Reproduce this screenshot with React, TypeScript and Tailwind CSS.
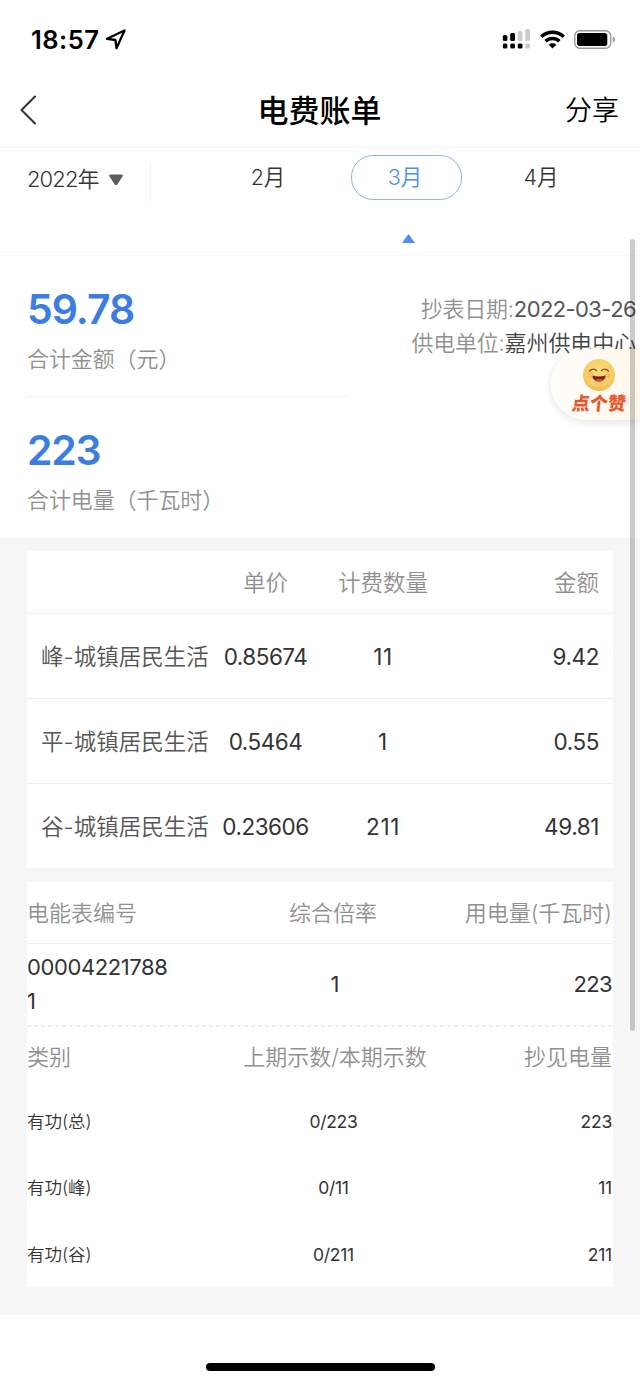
import React from "react";

const charges = [
  { name: "峰-城镇居民生活", price: "0.85674", qty: "11", amount: "9.42" },
  { name: "平-城镇居民生活", price: "0.5464", qty: "1", amount: "0.55" },
  { name: "谷-城镇居民生活", price: "0.23606", qty: "211", amount: "49.81" },
];

const readings = [
  { type: "有功(总)", range: "0/223", used: "223" },
  { type: "有功(峰)", range: "0/11", used: "11" },
  { type: "有功(谷)", range: "0/211", used: "211" },
];

function StatusBar() {
  return (
    <div className="flex h-[78px] items-center pl-[31px] pr-6">
      <span className="w-[69px] pt-[2px] text-[25.5px] leading-none font-semibold tracking-[0.5px]">18:57</span>
      <svg className="ml-[5px]" width="22" height="21" viewBox="0 0 22 21" fill="none" stroke="#000" strokeWidth="2.3" strokeLinejoin="round">
        <path d="M19.500 1.500 2 9.800l8.400 1.200 1.100 8.200z" />
      </svg>
      <svg className="ml-auto" width="28" height="20" viewBox="0 0 28 20">
        <g fill="#000">
          <rect x="0.800" y="6" width="4.600" height="6" rx="1.500" />
          <rect x="8.200" y="4" width="4.800" height="8" rx="1.500" />
          <rect x="0.800" y="14.600" width="4.600" height="5" rx="1.500" />
          <rect x="8.200" y="14.600" width="4.800" height="5" rx="1.500" />
          <rect x="15.700" y="14.600" width="4.800" height="5" rx="1.500" />
        </g>
        <g fill="#ccc">
          <rect x="15.700" y="2" width="4.800" height="10" rx="1.500" />
          <rect x="23.200" y="0" width="4.800" height="12" rx="1.500" />
          <rect x="23.200" y="14.600" width="4.800" height="5" rx="1.500" />
        </g>
      </svg>
      <svg className="ml-[10px]" width="25" height="19" viewBox="0 0 25 19" fill="none" stroke="#000" strokeWidth="3.500">
        <path d="M1.300 6.700a16.200 16.200 0 0 1 22.400 0" />
        <path d="M5.600 11.200a10 10 0 0 1 13.800 0" />
        <path d="M8.700 14.800a5.600 5.600 0 0 1 7.600 0L12.500 18.600z" fill="#000" stroke="none" />
      </svg>
      <svg className="ml-[9px]" width="42" height="19" viewBox="0 0 42 19">
        <rect x="0.800" y="0.800" width="35.900" height="17.400" rx="5" fill="none" stroke="#999" strokeWidth="1.400" />
        <rect x="3" y="3" width="30.300" height="13" rx="2.800" fill="#000" />
        <path d="M38.800 6.500c3 .9 3 5.100 0 6z" fill="#999" />
      </svg>
    </div>
  );
}

function Header() {
  return (
    <header className="grid h-[70px] grid-cols-3 items-center border-b border-[#f4f4f4] pb-[5px] pl-5 pr-[21px]">
      <svg width="17" height="30" viewBox="0 0 17 30" fill="none" stroke="#333" strokeWidth="2.1" strokeLinecap="round" strokeLinejoin="round">
        <path d="M15 1.500 1.500 15 15 28.500" />
      </svg>
      <h1 className="pt-[2px] text-center text-[31px] leading-[40px] font-medium">电费账单</h1>
      <span className="pt-[2px] text-right text-[27px] leading-[40px] font-[350]">分享</span>
    </header>
  );
}

function MonthPicker() {
  return (
    <nav className="flex h-[108px] border-b border-[#f7f7f7] text-[22px] font-[350] text-[#333]">
      <div className="mt-[14px] flex h-10 w-[151px] items-center border-r border-[#f3f3f3] pb-[6px] pl-[27px]">
        <span className="w-[82px] tracking-[-0.9px] whitespace-nowrap">2022年</span>
        <svg width="14" height="12" viewBox="0 0 15 12" className="mt-px">
          <path d="M2 0h11c1.700 0 2.200 1.300 1.300 2.500L8.900 10.700c-.8 1-2 1-2.800 0L.700 2.500C-.2 1.300.3 0 2 0z" fill="#5c5c5c" />
        </svg>
      </div>
      <div className="ml-[49px] mt-[7px] flex items-start text-[21.5px]">
        <div className="flex h-[45px] w-[136px] items-center justify-center">2月</div>
        <div className="ml-[15px] flex flex-col items-center">
          <div className="flex h-[45px] w-[111px] items-center justify-center rounded-[22px] border border-[#8ab4f2] pr-[3px] text-[#4b8ef0]">3月</div>
          <svg className="mt-[34px] ml-[3px]" width="13" height="9" viewBox="0 0 13 9">
            <path d="M6.500 0 13 9H0z" fill="#4d8ff0" />
          </svg>
        </div>
        <div className="ml-[11px] flex h-[45px] w-[136px] items-center justify-center">4月</div>
      </div>
    </nav>
  );
}

function Summary() {
  const label = "mt-[7px] font-['Noto_Sans_CJK_SC',sans-serif] text-[22px] leading-[32px] font-[350] tracking-[-0.1px] text-[#909090]";
  return (
    <section className="flex h-[282px] justify-between pl-[27px] pr-[4px]">
      <div className="w-[321px] shrink-0">
        <div className="h-[141px] border-b border-[#f1f1f1] pt-[28px]">
          <div className="text-[41px] leading-[50px] font-semibold tracking-[-1px] text-[#3b7de0]">59.78</div>
          <div className={label}>合计金额（元）</div>
        </div>
        <div className="pt-[28px]">
          <div className="text-[41px] leading-[50px] font-semibold tracking-[-1.3px] text-[#3b7de0]">223</div>
          <div className={label}>合计电量（千瓦时）</div>
        </div>
      </div>
      <div className="pt-[36px] text-right text-[22px] leading-[34px] whitespace-nowrap">
        <div><span className="font-[350] tracking-[-0.2px] text-[#909090]">抄表日期:</span><span className="tracking-[-0.6px] text-[#555]">2022-03-26</span></div>
        <div><span className="font-[350] tracking-[-0.2px] text-[#909090]">供电单位:</span><span className="font-[350] tracking-[-0.1px] text-[#444]">嘉州供电中心</span></div>
      </div>
    </section>
  );
}

function LikeBadge() {
  return (
    <div className="absolute top-[349px] right-0 flex h-[71px] w-[89px] flex-col items-center rounded-l-[36px] bg-gradient-to-r from-[#fffdfb] to-[#fff7ea] pt-[9px] pl-[7px] shadow-[0_2px_8px_rgba(0,0,0,0.12)]">
      <svg width="34" height="34" viewBox="0 0 34 34">
        <defs>
          <radialGradient id="face" cx="50%" cy="35%" r="65%">
            <stop offset="0" stopColor="#fbdc7b" />
            <stop offset="0.75" stopColor="#f6cc66" />
            <stop offset="1" stopColor="#f0b750" />
          </radialGradient>
        </defs>
        <circle cx="17" cy="17" r="16" fill="url(#face)" />
        <circle cx="8.500" cy="17.500" r="3" fill="#f7b04f" opacity=".6" />
        <circle cx="25.500" cy="17.500" r="3" fill="#f7b04f" opacity=".6" />
        <path d="M7.500 13q3.500-3.500 7-.5M19.500 12.500q3.500-3 7 .5" fill="none" stroke="#76501f" strokeWidth="1.400" strokeLinecap="round" />
        <path d="M10.500 17.500q6.500 1.800 13 0c0 8-13 8-13 0z" fill="#6b2418" />
        <path d="M12.500 21.800q4.500-2 9 0-4.500 3.500-9 0z" fill="#ef3f3c" />
      </svg>
      <span className="-skew-x-6 text-[18px] leading-[24px] font-black text-[#e8582f]">点个赞</span>
    </div>
  );
}

function ChargeTable() {
  const cols = "grid grid-cols-[169px_111px_124px_1fr] items-center pl-[14px] pr-[14px] text-center";
  return (
    <section className="h-[317px] bg-white text-[22.5px]">
      <div className={`${cols} h-[63px] border-b border-[#ececec] pt-[2px] font-[350] text-[#909090]`}>
        <span />
        <span>单价</span>
        <span>计费数量</span>
        <span className="text-right">金额</span>
      </div>
      {charges.map((c) => (
        <div key={c.name} className={`${cols} h-[85px] border-b border-[#f0f0f0] pt-px text-[#333] last:border-0`}>
          <span className="text-left font-[350] whitespace-nowrap text-[#555]">{c.name}</span>
          <span className="tracking-[-0.5px]">{c.price}</span>
          <span className="tracking-[0.6px]">{c.qty}</span>
          <span className="text-right tracking-[-0.4px]">{c.amount}</span>
        </div>
      ))}
    </section>
  );
}

function MeterTable() {
  const cols = "grid grid-cols-[180px_1fr_149px] items-center text-center";
  return (
    <section className="mt-[14px] h-[405px] bg-white pr-px text-[22px]">
      <div className={`${cols} -mr-px h-[62px] border-b border-[#ececec] pt-[2px] pr-px font-[350] text-[#909090]`}>
        <span className="text-left">电能表编号</span>
        <span className="-ml-1">综合倍率</span>
        <span className="text-right whitespace-nowrap">用电量(千瓦时)</span>
      </div>
      <div className={`${cols} h-[81px] pb-px leading-[34px] text-[#333]`}>
        <span className="w-[145px] text-left tracking-[-0.4px] break-all">000042217881</span>
        <span>1</span>
        <span className="text-right tracking-[-0.6px]">223</span>
      </div>
      <div className="-mr-px h-[2px] bg-[repeating-linear-gradient(90deg,#ededed_0_4px,transparent_4px_7px)]" />
      <div className={`${cols} h-[61px] font-[350] text-[#909090]`}>
        <span className="text-left">类别</span>
        <span className="whitespace-nowrap">上期示数/本期示数</span>
        <span className="text-right">抄见电量</span>
      </div>
      {readings.map((r) => (
        <div key={r.type} className={`${cols} h-[66.500px] pt-px text-[17.5px] text-[#333]`}>
          <span className="text-left font-[350]">{r.type}</span>
          <span className="-ml-[3px] tracking-[-0.3px]">{r.range}</span>
          <span className="text-right tracking-[-0.2px]">{r.used}</span>
        </div>
      ))}
    </section>
  );
}

export default function App() {
  return (
    <div className="relative flex h-[1385px] w-[640px] flex-col overflow-hidden bg-white font-[Inter,'Noto_Sans_CJK_SC',sans-serif] text-black">
      <StatusBar />
      <Header />
      <MonthPicker />
      <Summary />
      <main className="h-[777px] bg-[#f6f6f6] px-[27px] pt-[13px]">
        <ChargeTable />
        <MeterTable />
      </main>
      <div className="mx-auto mt-[48px] h-[8px] w-[229px] rounded-full bg-black" />
      <LikeBadge />
      <div className="absolute top-[239px] right-[5px] h-[792px] w-[5px] rounded-full bg-black/20" />
    </div>
  );
}
